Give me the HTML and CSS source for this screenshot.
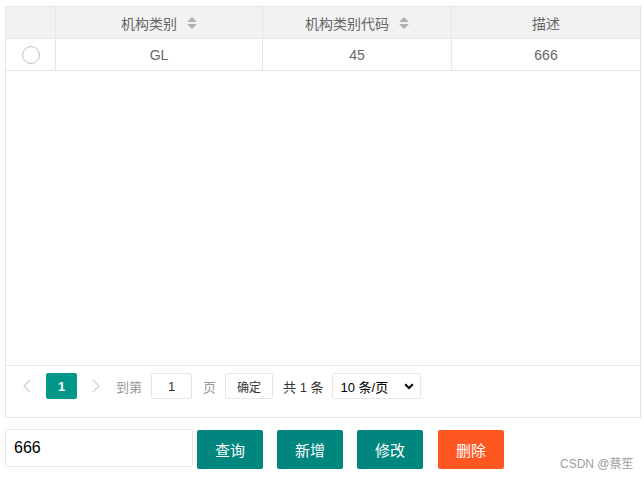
FILE: index.html
```html
<!DOCTYPE html>
<html lang="zh-CN">
<head>
<meta charset="utf-8">
<link rel="stylesheet" href="styles.css">
</head>
<body>
<div class="page">
  <div class="table-box">
    <div class="table-area">
      <div class="row head">
        <div class="cell c1"></div>
        <div class="cell c2"><span>机构类别</span><span class="sort"><i class="up"></i><i class="down"></i></span></div>
        <div class="cell c3"><span>机构类别代码</span><span class="sort"><i class="up"></i><i class="down"></i></span></div>
        <div class="cell c4"><span>描述</span></div>
      </div>
      <div class="row body">
        <div class="cell c1"><span class="radio"></span></div>
        <div class="cell c2 num">GL</div>
        <div class="cell c3 num">45</div>
        <div class="cell c4 num">666</div>
      </div>
    </div>
    <div class="pager">
      <span class="arrow prev"><svg width="8" height="14" viewBox="0 0 8 14"><path d="M7 1 L1 7 L7 13" fill="none" stroke="#d2d2d2" stroke-width="1.3"/></svg></span>
      <span class="cur">1</span>
      <span class="arrow next"><svg width="8" height="14" viewBox="0 0 8 14"><path d="M1 1 L7 7 L1 13" fill="none" stroke="#d2d2d2" stroke-width="1.3"/></svg></span>
      <span class="lbl">到第</span>
      <span class="jump">1</span>
      <span class="lbl ye">页</span>
      <span class="ok">确定</span>
      <span class="total">共 1 条</span>
      <span class="limit"><span>10 条/页</span><svg width="10" height="7" viewBox="0 0 10 7"><path d="M1.2 1.2 L5 5 L8.8 1.2" fill="none" stroke="#000" stroke-width="2"/></svg></span>
    </div>
  </div>
  <div class="toolbar">
    <div class="search">666</div>
    <span class="btn first">查询</span>
    <span class="btn">新增</span>
    <span class="btn">修改</span>
    <span class="btn danger">删除</span>
  </div>
  <div class="mark">CSDN @蔡笙</div>
</div>
</body>
</html>
```

FILE: styles.css
```css
html, body {
  margin: 0;
  padding: 0;
  background: #fff;
}
body {
  font-family: "Liberation Sans", "Noto Sans CJK SC", sans-serif;
  font-size: 14px;
  color: #666;
}
.page {
  position: relative;
  width: 643px;
  height: 477px;
  padding: 6px 0 0 5px;
  box-sizing: border-box;
}
.table-box {
  width: 636px;
  border: 1px solid #e6e6e6;
  box-sizing: border-box;
}
.table-area {
  height: 358px;
  border-bottom: 1px solid #e6e6e6;
}
.row {
  display: flex;
  height: 32px;
  border-bottom: 1px solid #e6e6e6;
  box-sizing: border-box;
}
.row.head {
  background: #f2f2f2;
}
.cell {
  box-sizing: border-box;
  border-right: 1px solid #e6e6e6;
  display: flex;
  align-items: center;
  justify-content: center;
  height: 100%;
}
.c1 { width: 50px; }
.c2 { width: 207px; }
.c3 { width: 189px; }
.c4 { width: 188px; border-right: none; }
.sort {
  display: inline-flex;
  flex-direction: column;
  gap: 2px;
  margin-left: 10px;
}
.sort i {
  display: block;
  width: 0;
  height: 0;
  border-left: 5px solid transparent;
  border-right: 5px solid transparent;
}
.sort .up { border-bottom: 5px solid #b2b2b2; }
.sort .down { border-top: 5px solid #b2b2b2; }
.radio {
  width: 18px;
  height: 18px;
  border: 1px solid #c2c2c2;
  border-radius: 50%;
  box-sizing: border-box;
}
.pager {
  height: 51px;
  box-sizing: border-box;
  padding: 7px 0 0 15px;
  display: flex;
  align-items: flex-start;
  font-size: 13px;
  color: #999;
}
.pager > span {
  height: 26px;
  display: flex;
  align-items: center;
  box-sizing: border-box;
}
.arrow { width: 12px; justify-content: center; }
.prev { margin-right: 13px; }
.next { margin-left: 13px; margin-right: 14px; }
.cur {
  width: 31px;
  justify-content: center;
  background: #009688;
  color: #fff;
  border-radius: 2px;
  font-size: 13px;
  font-weight: bold;
}
.jump {
  width: 41px;
  margin-left: 9px;
  border: 1px solid #e6e6e6;
  border-radius: 2px;
  justify-content: center;
  color: #333;
  font-size: 13px;
}
.ye { margin-left: 11px; }
.ok {
  width: 48px;
  margin-left: 9px;
  border: 1px solid #e6e6e6;
  border-radius: 2px;
  justify-content: center;
  color: #333;
  font-size: 12px;
}
.total {
  margin-left: 10px;
  color: #333;
  font-size: 13px;
}
.limit {
  width: 89px;
  margin-left: 8px;
  border: 1px solid #e6e6e6;
  border-radius: 2px;
  justify-content: space-between;
  padding: 0 6px 0 8px;
  color: #000;
  font-size: 13px;
}
.toolbar {
  display: flex;
  align-items: flex-start;
  margin-top: 11px;
}
.search {
  width: 188px;
  height: 38px;
  box-sizing: border-box;
  border: 1px solid #e6e6e6;
  border-radius: 2px;
  padding-left: 8px;
  display: flex;
  align-items: center;
  font-size: 16px;
  color: #000;
}
.btn {
  width: 66px;
  height: 39px;
  margin-left: 14px;
  margin-top: 1px;
  background: #00857f;
  color: #fff;
  border-radius: 2px;
  display: flex;
  align-items: center;
  justify-content: center;
  font-size: 15px;
  font-family: "Noto Sans CJK SC", sans-serif;
}
.btn.first { margin-left: 4px; }
.btn.danger { background: #ff5722; margin-left: 15px; }
.mark {
  position: absolute;
  left: 560px;
  top: 454px;
  font-size: 12px;
  color: #a0a0a0;
}
```
